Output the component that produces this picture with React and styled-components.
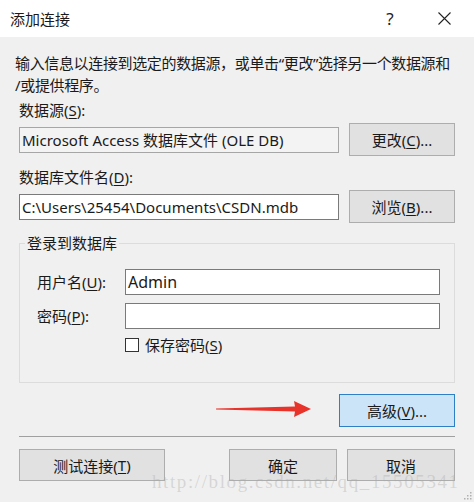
import React from "react";
import styled, { createGlobalStyle } from "styled-components";

const GlobalStyle = createGlobalStyle`
  html, body {
    margin: 0;
    padding: 0;
    background: #f0f0f0;
  }
  * {
    box-sizing: border-box;
  }
`;

const FONT = `"Noto Sans", "Noto Sans CJK SC", sans-serif`;

const Window = styled.div`
  position: relative;
  width: 474px;
  height: 502px;
  background: #f0f0f0;
  font-family: ${FONT};
  color: #1a1a1a;
  display: flex;
  flex-direction: column;
  overflow: hidden;
`;

const TitleBar = styled.div`
  height: 37px;
  background: #ffffff;
  display: flex;
  align-items: center;
  padding-left: 10px;
`;

const Title = styled.div`
  flex: 1;
  font-size: 15px;
  color: #1a1a1a;
`;

const TitleButton = styled.div`
  width: ${(p) => p.$w || 48}px;
  height: 37px;
  display: flex;
  align-items: center;
  justify-content: center;
  font-size: 17px;
  font-family: "Noto Sans", sans-serif;
  color: #222;
`;

const Body = styled.div`
  padding: 15px 19px 0 19px;
  display: flex;
  flex-direction: column;
`;

const Description = styled.div`
  margin: 0 -4px;
  font-size: 15px;
  line-height: 22px;
  letter-spacing: -0.35px;
  white-space: nowrap;
`;

const Label = styled.div`
  font-size: 15px;
  line-height: 20px;
  margin-top: ${(p) => p.$top || 0}px;
`;

const Key = styled.span`
  text-decoration: underline;
  text-underline-offset: 2px;
`;

const FieldRow = styled.div`
  display: flex;
  align-items: center;
  gap: 10px;
  margin-top: 3px;
`;

const TextBox = styled.div`
  flex: 1;
  height: 26px;
  border: 1px solid ${(p) => (p.$readOnly ? "#a6a6a6" : "#7a7a7a")};
  background: ${(p) => (p.$readOnly ? "#f3f3f3" : "#ffffff")};
  font-size: 15px;
  line-height: 24px;
  padding-left: 2px;
  white-space: nowrap;
  overflow: hidden;
`;

const Button = styled.div`
  width: ${(p) => p.$w}px;
  height: ${(p) => p.$h || 33}px;
  border: 1px solid ${(p) => (p.$focus ? "#2f7fc6" : "#adadad")};
  background: ${(p) => (p.$focus ? "#cce4f7" : "#e1e1e1")};
  display: flex;
  align-items: center;
  justify-content: center;
  font-size: 15px;
  color: #1a1a1a;
`;

const Group = styled.fieldset`
  margin: 10px 0 0 0;
  padding: 16px 14px 27px 17px;
  border: 1px solid #dcdcdc;
  min-width: 0;
`;

const Legend = styled.legend`
  font-size: 15px;
  line-height: 20px;
  padding: 0 2px;
  margin-left: -12px;
`;

const LoginRow = styled.div`
  display: flex;
  align-items: center;
  margin-bottom: ${(p) => p.$gap || 0}px;
`;

const LoginLabel = styled.div`
  width: 88px;
  font-size: 15px;
  line-height: 20px;
`;

const LoginInput = styled.div`
  flex: 1;
  height: 26px;
  border: 1px solid #7a7a7a;
  background: #ffffff;
  font-size: 16px;
  line-height: 24px;
  padding-left: 2px;
`;

const CheckRow = styled.div`
  display: flex;
  align-items: center;
  gap: 6px;
  padding-left: 88px;
  margin-top: 6px;
  font-size: 15px;
  line-height: 20px;
`;

const CheckBox = styled.div`
  width: 14px;
  height: 14px;
  border: 1px solid #333;
  background: #fff;
`;

const AdvancedRow = styled.div`
  display: flex;
  justify-content: flex-end;
  margin-top: 11px;
`;

const Separator = styled.div`
  height: 1px;
  background: #a0a0a0;
  margin-top: 9px;
`;

const BottomRow = styled.div`
  display: flex;
  gap: 10px;
  margin-top: 12px;
`;

const Spacer = styled.div`
  flex: 1;
`;

const Arrow = styled.svg`
  position: absolute;
  left: 214px;
  top: 398px;
`;

const Watermark = styled.div`
  position: absolute;
  left: 152px;
  top: 471px;
  font-family: "Liberation Serif", serif;
  font-size: 19px;
  letter-spacing: 1.6px;
  color: rgba(170, 170, 170, 0.38);
  pointer-events: none;
  white-space: nowrap;
`;

const Grip = styled.svg`
  position: absolute;
  right: 2px;
  bottom: 2px;
`;

const App = () => {
  return (
    <Window>
      <GlobalStyle />
      <TitleBar>
        <Title>添加连接</Title>
        <TitleButton>?</TitleButton>
        <TitleButton $w={60}>
          <svg width="13" height="13" viewBox="0 0 13 13">
            <path d="M0.5 0.5 L12.5 12.5 M12.5 0.5 L0.5 12.5" stroke="#222" strokeWidth="1.1" />
          </svg>
        </TitleButton>
      </TitleBar>
      <Body>
        <Description>
          输入信息以连接到选定的数据源，或单击“更改”选择另一个数据源和
          <br />
          /或提供程序。
        </Description>
        <Label $top={4}>
          数据源(<Key>S</Key>):
        </Label>
        <FieldRow>
          <TextBox $readOnly>Microsoft Access 数据库文件 (OLE DB)</TextBox>
          <Button $w={106}>
            更改(<Key>C</Key>)...
          </Button>
        </FieldRow>
        <Label $top={11}>
          数据库文件名(<Key>D</Key>):
        </Label>
        <FieldRow>
          <TextBox>C:\Users\25454\Documents\CSDN.mdb</TextBox>
          <Button $w={106}>
            浏览(<Key>B</Key>)...
          </Button>
        </FieldRow>
        <Group>
          <Legend>登录到数据库</Legend>
          <LoginRow $gap={8}>
            <LoginLabel>
              用户名(<Key>U</Key>):
            </LoginLabel>
            <LoginInput>Admin</LoginInput>
          </LoginRow>
          <LoginRow>
            <LoginLabel>
              密码(<Key>P</Key>):
            </LoginLabel>
            <LoginInput />
          </LoginRow>
          <CheckRow>
            <CheckBox />
            <span>
              保存密码(<Key>S</Key>)
            </span>
          </CheckRow>
        </Group>
        <AdvancedRow>
          <Button $w={116} $focus>
            高级(<Key>V</Key>)...
          </Button>
        </AdvancedRow>
        <Separator />
        <BottomRow>
          <Button $w={146} $h={32}>
            测试连接(<Key>T</Key>)
          </Button>
          <Spacer />
          <Button $w={108} $h={32}>
            确定
          </Button>
          <Button $w={108} $h={32}>
            取消
          </Button>
        </BottomRow>
      </Body>
      <Arrow width="100" height="22" viewBox="0 0 100 22">
        <polygon points="2,10.5 81,8.5 80,3 97,11 80,19 81,13.5 2,11.5" fill="#e8332b" />
      </Arrow>
      <Watermark>http://blog.csdn.net/qq_15505341</Watermark>
      <Grip width="8" height="8" viewBox="0 0 8 8">
        <rect x="6" y="0" width="1.5" height="1.5" fill="#b0b0b0" />
        <rect x="3" y="3" width="1.5" height="1.5" fill="#b0b0b0" />
        <rect x="6" y="3" width="1.5" height="1.5" fill="#b0b0b0" />
        <rect x="0" y="6" width="1.5" height="1.5" fill="#b0b0b0" />
        <rect x="3" y="6" width="1.5" height="1.5" fill="#b0b0b0" />
        <rect x="6" y="6" width="1.5" height="1.5" fill="#b0b0b0" />
      </Grip>
    </Window>
  );
};

export default App;
